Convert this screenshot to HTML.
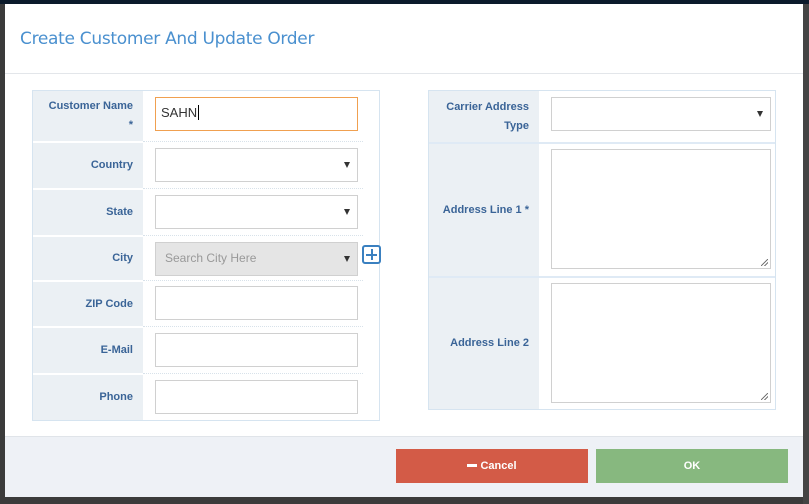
<!DOCTYPE html>
<html><head><style>
*{box-sizing:border-box;margin:0;padding:0}
body{width:809px;height:504px;background:#3b3b3b;position:relative;overflow:hidden;font-family:"Liberation Sans",sans-serif}
.a{position:absolute}
.modal{left:5px;top:4px;width:798px;height:493px;background:#fff}
.lbl{position:absolute;background:#ebf0f4;color:#3a6497;font-weight:bold;font-size:11px;text-align:right;padding-right:10px;display:flex;align-items:center;justify-content:flex-end;line-height:19px}
.inp{position:absolute;background:#fff;border:1px solid #d0d0d0}
.arr{position:absolute;right:7px;top:50%;margin-top:-3px;width:0;height:0;border-left:3.5px solid transparent;border-right:3.5px solid transparent;border-top:6px solid #333}
.sep{position:absolute;height:0;border-top:1px dotted #d8e2ea}
.sepl{position:absolute;height:2px;background:#fff}
.rs{position:absolute;right:2px;bottom:2px;width:7px;height:7px;background:linear-gradient(135deg,transparent 45%,#777 45%,#777 55%,transparent 55%,transparent 70%,#777 70%,#777 80%,transparent 80%)}
</style></head><body>
<div class="a" style="left:0;top:0;width:809px;height:4px;background:#0b1a2b"></div>
<div class="a" style="left:803px;top:4px;width:6px;height:500px;background:#444"></div>
<div class="a modal"></div>
<div class="a" style="left:20px;top:29px;font-size:17px;color:#4a90cf;font-family:'DejaVu Sans',sans-serif;letter-spacing:-0.3px">Create Customer And Update Order</div>
<div class="a" style="left:5px;top:73px;width:798px;height:1px;background:#e3e6ea"></div>
<div class="a" style="left:5px;top:436px;width:798px;height:61px;background:#eef1f6;border-top:1px solid #e0e4e9"></div>

<!-- left table -->
<div class="a" style="left:32px;top:90px;width:348px;height:331px;border:1px solid #d6e4f0"></div>
<div class="lbl" style="left:33px;top:91px;width:110px;height:50px;padding-top:0">Customer Name<br>*</div>
<div class="lbl" style="left:33px;top:143px;width:110px;height:45px">Country</div>
<div class="lbl" style="left:33px;top:190px;width:110px;height:45px">State</div>
<div class="lbl" style="left:33px;top:237px;width:110px;height:43px">City</div>
<div class="lbl" style="left:33px;top:282px;width:110px;height:44px">ZIP Code</div>
<div class="lbl" style="left:33px;top:328px;width:110px;height:45px">E-Mail</div>
<div class="lbl" style="left:33px;top:375px;width:110px;height:45px">Phone</div>
<div class="sep" style="left:143px;top:141px;width:220px"></div>
<div class="sep" style="left:143px;top:188px;width:220px"></div>
<div class="sep" style="left:143px;top:235px;width:220px"></div>
<div class="sep" style="left:143px;top:280px;width:220px"></div>
<div class="sep" style="left:143px;top:326px;width:220px"></div>
<div class="sep" style="left:143px;top:373px;width:220px"></div>
<div class="inp" style="left:155px;top:97px;width:203px;height:34px;border-color:#f0a050;font-size:13px;color:#333;padding:7px 0 0 5px">SAHN<span style="border-left:1px solid #000;margin-left:1px"></span></div>
<div class="inp" style="left:155px;top:148px;width:203px;height:34px"><div class="arr"></div></div>
<div class="inp" style="left:155px;top:195px;width:203px;height:34px"><div class="arr"></div></div>
<div class="inp" style="left:155px;top:242px;width:203px;height:34px;background:#e5e5e5;font-size:12px;color:#999;padding:8px 0 0 9px">Search City Here<div class="arr"></div></div>
<div class="a" style="left:362px;top:245px;width:19px;height:19px;border:2px solid #3a80c0;border-radius:3px"><div class="a" style="left:2px;top:6.5px;width:11px;height:2px;background:#3a80c0"></div><div class="a" style="left:6.5px;top:2px;width:2px;height:11px;background:#3a80c0"></div></div>
<div class="inp" style="left:155px;top:286px;width:203px;height:34px"></div>
<div class="inp" style="left:155px;top:333px;width:203px;height:34px"></div>
<div class="inp" style="left:155px;top:380px;width:203px;height:34px"></div>

<!-- right table -->
<div class="a" style="left:428px;top:90px;width:348px;height:320px;border:1px solid #d6e4f0"></div>
<div class="lbl" style="left:429px;top:91px;width:110px;height:51px">Carrier Address<br>Type</div>
<div class="lbl" style="left:429px;top:144px;width:110px;height:132px">Address Line 1 *</div>
<div class="lbl" style="left:429px;top:278px;width:110px;height:131px">Address Line 2</div>
<div class="a" style="left:429px;top:142px;width:346px;height:2px;background:#dfeaf5"></div>
<div class="a" style="left:429px;top:276px;width:346px;height:2px;background:#dfeaf5"></div>
<div class="inp" style="left:551px;top:97px;width:220px;height:34px"><div class="arr"></div></div>
<div class="inp" style="left:551px;top:149px;width:220px;height:120px"><div class="rs"></div></div>
<div class="inp" style="left:551px;top:283px;width:220px;height:120px"><div class="rs"></div></div>

<!-- buttons -->
<div class="a" style="left:396px;top:449px;width:192px;height:34px;background:#d35b47;color:#fff;font-weight:bold;font-size:11px;text-align:center;line-height:34px"><span style="display:inline-block;width:10px;height:3px;background:#fff;vertical-align:middle;margin-right:3px;position:relative;top:-1px"></span>Cancel</div>
<div class="a" style="left:596px;top:449px;width:192px;height:34px;background:#87b87f;color:#fff;font-weight:bold;font-size:11px;text-align:center;line-height:34px">OK</div>
</body></html>
